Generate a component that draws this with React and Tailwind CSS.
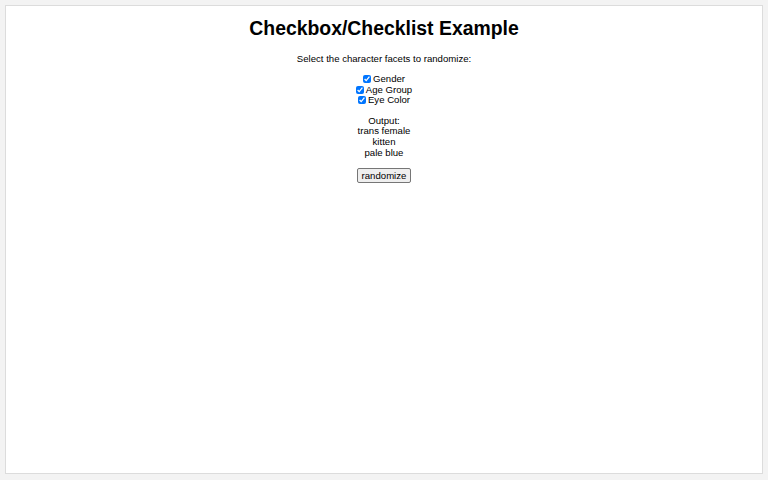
import { useState } from 'react'

const FACETS = {
  gender: { label: 'Gender', values: ['trans female', 'cis male', 'nonbinary', 'trans male', 'cis female'] },
  age: { label: 'Age Group', values: ['kitten', 'young adult', 'adult', 'elder'] },
  eyes: { label: 'Eye Color', values: ['pale blue', 'amber', 'green', 'copper', 'gold'] },
}

const pick = list => list[Math.floor(Math.random() * list.length)]

export default function App() {
  const [enabled, setEnabled] = useState({ gender: true, age: true, eyes: true })
  const [output, setOutput] = useState({ gender: 'trans female', age: 'kitten', eyes: 'pale blue' })

  function randomize() {
    const next = { ...output }
    Object.keys(FACETS).forEach(key => {
      if (enabled[key]) next[key] = pick(FACETS[key].values)
    })
    setOutput(next)
  }

  return (
    <div className="min-h-screen bg-[#f3f3f3] px-[5px] pt-[5px] pb-[6px] font-['Liberation_Sans',Arial,sans-serif] text-black">
      <div className="h-[469px] bg-white border border-[#dcdcdc] text-center">
        <h1 className="mt-[11px] text-[19.4px] leading-[22px] font-bold">Checkbox/Checklist Example</h1>

        <p className="mt-[14px] text-[9.6px] leading-[11px]">Select the character facets to randomize:</p>

        <div className="mt-[10px] flex flex-col items-center text-[9.6px] leading-[10.5px]">
          {Object.entries(FACETS).map(([key, facet]) => (
            <label key={key} className="flex items-center gap-[2px]">
              <input
                type="checkbox"
                checked={enabled[key]}
                onChange={e => setEnabled({ ...enabled, [key]: e.target.checked })}
                className="w-[8px] h-[8px] m-0 accent-[#0075ff]"
              />
              <span>{facet.label}</span>
            </label>
          ))}
        </div>

        <div className="mt-[10px] text-[9.6px] leading-[10.7px]">
          <div>Output:</div>
          <div>{output.gender}</div>
          <div>{output.age}</div>
          <div>{output.eyes}</div>
        </div>

        <button
          onClick={randomize}
          className="mt-[10px] h-[15px] px-[4px] text-[9.6px] leading-[12px] bg-[#efefef] border border-[#767676] rounded-[2px]"
        >
          randomize
        </button>
      </div>
    </div>
  )
}
